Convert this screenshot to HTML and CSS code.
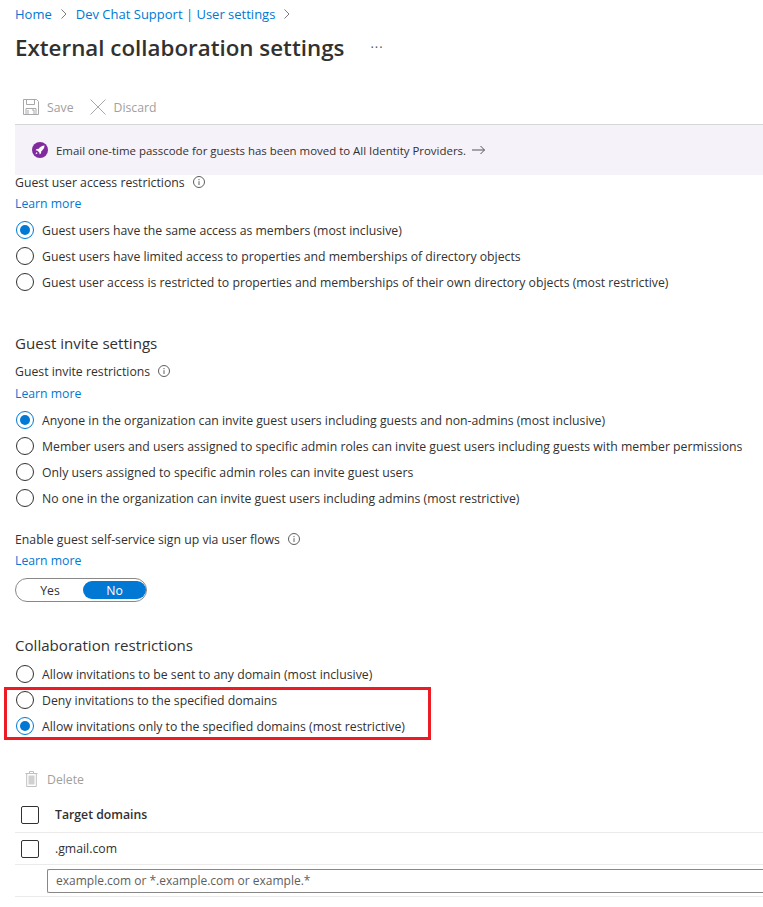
FILE: index.html
```html
<!DOCTYPE html>
<html lang="en">
<head>
<meta charset="utf-8">
<title>External collaboration settings</title>
<link rel="stylesheet" href="styles.css">
</head>
<body>
<nav class="crumbs">
  <a href="#">Home</a>
  <svg class="chev" viewBox="0 0 8 12"><path d="M1.500 1.500 6 6l-4.500 4.500"/></svg>
  <a href="#">Dev Chat Support | User settings</a>
  <svg class="chev" viewBox="0 0 8 12"><path d="M1.500 1.500 6 6l-4.500 4.500"/></svg>
</nav>
<header class="title-row">
  <h1>External collaboration settings</h1>
  <span class="more">···</span>
</header>
<div class="toolbar">
  <span class="tool">
    <svg class="tool-icon" viewBox="0 0 16 16"><path d="M.5.5h13l2 2v13H.5zM3.500.5v5h8v-5M3 15.500v-6h10v6M5 11v4.500M9 11h2v4.500"/></svg>
    Save
  </span>
  <span class="tool">
    <svg class="tool-icon" viewBox="0 0 16 16"><path d="M.5.5l15 15M15.500.5l-15 15"/></svg>
    Discard
  </span>
</div>
<div class="banner">
  <svg class="rocket" viewBox="0 0 16 16"><circle cx="8" cy="8" r="8" fill="#7f2b9e"/><path fill="#fff" d="M12.500 3.500c-2.500.1-4.300 1.200-5.700 3.200L4.700 7 3.600 8.300l2 .4L7.300 10.400l.4 2 1.300-1.100.3-2.100c2-1.400 3.100-3.200 3.200-5.700zM4.800 10.200c-.8.400-1.100 1.200-1.200 2 .8-.1 1.600-.4 2-1.200z"/></svg>
  <span>Email one-time passcode for guests has been moved to All Identity Providers.</span>
  <svg class="arrow" viewBox="0 0 14 10"><path d="M0 5h12.500M8.500 1l4 4-4 4"/></svg>
</div>

<div class="label first">Guest user access restrictions <svg class="info" viewBox="0 0 12 12"><circle cx="6" cy="6" r="5.500"/><path d="M6 5.200V9M6 3v1.200"/></svg></div>
<a class="learn learn-first" href="#">Learn more</a>
<ul class="radios r1">
  <li><span class="radio on"></span>Guest users have the same access as members (most inclusive)</li>
  <li><span class="radio"></span>Guest users have limited access to properties and memberships of directory objects</li>
  <li><span class="radio"></span>Guest user access is restricted to properties and memberships of their own directory objects (most restrictive)</li>
</ul>

<h2 class="h-invite">Guest invite settings</h2>
<div class="label l-invite">Guest invite restrictions <svg class="info" viewBox="0 0 12 12"><circle cx="6" cy="6" r="5.500"/><path d="M6 5.200V9M6 3v1.200"/></svg></div>
<a class="learn learn-wide" href="#">Learn more</a>
<ul class="radios r1">
  <li><span class="radio on"></span>Anyone in the organization can invite guest users including guests and non-admins (most inclusive)</li>
  <li><span class="radio"></span>Member users and users assigned to specific admin roles can invite guest users including guests with member permissions</li>
  <li><span class="radio"></span>Only users assigned to specific admin roles can invite guest users</li>
  <li><span class="radio"></span>No one in the organization can invite guest users including admins (most restrictive)</li>
</ul>

<div class="label l-self">Enable guest self-service sign up via user flows <svg class="info" viewBox="0 0 12 12"><circle cx="6" cy="6" r="5.500"/><path d="M6 5.200V9M6 3v1.200"/></svg></div>
<a class="learn learn-first" href="#">Learn more</a>
<div class="toggle"><span class="opt">Yes</span><span class="opt sel">No</span></div>

<h2 class="h-collab">Collaboration restrictions</h2>
<div class="collab">
  <ul class="radios">
    <li><span class="radio"></span>Allow invitations to be sent to any domain (most inclusive)</li>
    <li><span class="radio"></span>Deny invitations to the specified domains</li>
    <li><span class="radio on"></span>Allow invitations only to the specified domains (most restrictive)</li>
  </ul>
  <div class="highlight"></div>
</div>

<div class="delete">
  <svg class="trash" viewBox="0 0 13 16"><path class="trash-line" d="M.5 2.500h12M4.500 2.500V.5h4v2M1.700 2.500v13h9.600v-13"/><rect x="3.500" y="4.500" width="6" height="9"/></svg>
  Delete
</div>
<div class="row head"><span class="check"></span><strong>Target domains</strong></div>
<div class="row item"><span class="check"></span><span>.gmail.com</span></div>
<div class="row entry"><input class="domain" type="text" placeholder="example.com or *.example.com or example.*"></div>
</body>
</html>
```
FILE: styles.css
```css
* { box-sizing: border-box; }
html, body { margin: 0; padding: 0; }
body {
  width: 763px;
  height: 907px;
  overflow: hidden;
  padding-left: 15px;
  font-family: "Open Sans", "Noto Sans", sans-serif;
  font-size: 12.250px;
  color: #323130;
  background: #fff;
}
a { color: #0078d4; text-decoration: none; }
ul { list-style: none; margin: 0; padding: 0; }

.crumbs { height: 28px; display: flex; align-items: center; gap: 8px; font-size: 13px; }
.chev { width: 8px; height: 12px; fill: none; stroke: #7a7a7a; stroke-width: 1; }

.title-row { height: 40px; padding-bottom: 2px; display: flex; align-items: center; }
h1 { margin: 0; font-size: 22.350px; font-weight: 600; color: #323130; }
.more { margin-left: 26px; font-size: 13px; color: #555; letter-spacing: 1px; }

.toolbar { height: 56px; padding: 29px 0 0 8px; display: flex; gap: 16px; color: #a19f9d; }
.tool { display: flex; align-items: center; gap: 8px; height: 20px; }
.tool-icon { width: 16px; height: 16px; fill: none; stroke: #a8a8a8; stroke-width: 1; }

.banner {
  height: 51px;
  border-top: 1px solid #d6d6d6;
  background: #f6f2fa;
  display: flex;
  align-items: center;
  padding-left: 17px;
  font-size: 11.450px;
}
.rocket { width: 16px; height: 16px; margin-right: 8px; flex: none; }
.arrow { width: 14px; height: 10px; margin-left: 6px; fill: none; stroke: #555; stroke-width: 1; }

.label { display: flex; align-items: center; gap: 8px; height: 18px; }
.first { margin-top: -2px; }
.info { width: 12px; height: 12px; fill: none; stroke: #605e5c; stroke-width: 1; }
.learn { display: block; height: 18px; line-height: 18px; }
.learn-first { margin-top: 4px; }
.learn-wide { margin-top: 5px; }

.radios li { display: flex; align-items: center; gap: 8px; height: 26px; }
.r1 { margin-top: 4px; }
.radio {
  position: relative;
  width: 18px;
  height: 18px;
  margin-left: 1px;
  border: 1px solid #323130;
  border-radius: 50%;
  flex: none;
}
.radio.on { border-color: #0078d4; }
.radio.on::after {
  content: "";
  position: absolute;
  inset: 3px;
  border-radius: 50%;
  background: #0078d4;
}

h2 { margin: 0; font-size: 15.100px; font-weight: 400; height: 20px; line-height: 20px; }
.h-invite { margin-top: 38px; }
.l-invite { margin-top: 9px; }
.l-self { margin-top: 19px; }

.toggle {
  width: 132px;
  height: 24px;
  margin-top: 8px;
  padding: 2px 0 2px 2px;
  display: flex;
  border: 1px solid #8a8886;
  border-radius: 12px;
}
.opt { width: 64px; display: flex; align-items: center; justify-content: center; border-radius: 9px; }
.sel { background: #0078d4; color: #fff; margin-left: 1px; width: 63px; }

.h-collab { margin-top: 33px; }
.collab { position: relative; margin-top: 6px; }
.highlight {
  position: absolute;
  left: -11px;
  top: 26px;
  width: 427px;
  height: 53px;
  border: 3px solid #ed1c24;
}

.delete { height: 20px; margin-top: 30px; padding-left: 10px; display: flex; align-items: center; gap: 9px; color: #a19f9d; }
.trash { width: 13px; height: 16px; }
.trash rect { fill: #d0d0d0; }
.trash-line { fill: none; stroke: #c0c0c0; }

.row { display: flex; align-items: center; border-bottom: 1px solid #edebe9; }
.head { height: 44px; padding-top: 8px; }
.head strong { font-weight: 600; }
.item { height: 32px; }
.check { width: 18px; height: 18px; margin: 0 16px 0 6px; border: 1px solid #323130; border-radius: 2px; flex: none; }
.entry { height: 32px; padding-left: 32px; }
.domain {
  width: 100%;
  height: 24px;
  padding: 0 8px;
  border: 1px solid #8a8886;
  border-right: 0;
  border-radius: 2px 0 0 2px;
  font: inherit;
  font-size: 12px;
  color: #323130;
}
.domain::placeholder { color: #605e5c; opacity: 1; }
```
